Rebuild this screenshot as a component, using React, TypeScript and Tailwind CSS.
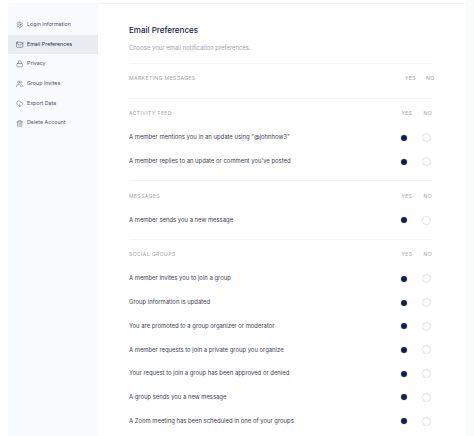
import { Settings, Mail, Lock, Users, CloudDownload, Trash2 } from "lucide-react";

const nav = [
  { label: "Login Information", Icon: Settings },
  { label: "Email Preferences", Icon: Mail, active: true },
  { label: "Privacy", Icon: Lock },
  { label: "Group Invites", Icon: Users },
  { label: "Export Data", Icon: CloudDownload },
  { label: "Delete Account", Icon: Trash2 },
];

const sections = [
  { title: "MARKETING MESSAGES", rows: [] as string[] },
  {
    title: "ACTIVITY FEED",
    rows: ['A member mentions you in an update using "@johnhow3"', "A member replies to an update or comment you've posted"],
  },
  { title: "MESSAGES", rows: ["A member sends you a new message"] },
  {
    title: "SOCIAL GROUPS",
    rows: [
      "A member invites you to join a group",
      "Group information is updated",
      "You are promoted to a group organizer or moderator",
      "A member requests to join a private group you organize",
      "Your request to join a group has been approved or denied",
      "A group sends you a new message",
      "A Zoom meeting has been scheduled in one of your groups",
    ],
  },
];

function Radios() {
  return (
    <div className="flex items-center gap-[15px] pr-[1px]">
      <span className="w-[6px] h-[6px] rounded-full bg-[#122145] ring-1 ring-[#e8edf8]" />
      <span className="w-[9px] h-[9px] rounded-full border border-[#e3e5e8] bg-white" />
    </div>
  );
}

export default function App() {
  return (
    <div className="w-[474px] h-[436px] overflow-hidden bg-[#fafbfe] flex font-['Inter',sans-serif]">
      <div className="w-[8px] h-full bg-white shrink-0" />
      <div className="flex flex-col shrink-0">
        <div className="h-[3px] w-[457px] bg-white shrink-0" />
        <div className="flex">
          <aside className="w-[90px] h-[433px] bg-[#f9fafd] pt-[12px] shrink-0">
            {nav.map(({ label, Icon, active }) => (
              <div
                key={label}
                className={`h-[19.7px] flex items-center gap-[3.5px] pl-[8px] text-[5.3px] ${active ? "bg-[#e9edf2] text-[#2d3748]" : "text-[#4a5568]"}`}
              >
                <Icon size={7.5} strokeWidth={1.5} className="shrink-0" />
                <span>{label}</span>
              </div>
            ))}
          </aside>
          <main className="w-[367px] h-[433px] bg-white border-t border-[#f3f4f6] pl-[31px] pr-[33px] shrink-0">
            <h1 className="text-[8px] font-medium text-[#122145] leading-[12px] pt-[20px]">Email Preferences</h1>
            <p className="text-[5.9px] text-[#a0a3a8] leading-[8px] mt-[8px] mb-[11px]">Choose your email notification preferences.</p>
            {sections.map((s, i) => (
              <section key={s.title} className={`border-t border-[#f3f4f6] pt-[8px] ${i === 0 ? "pb-[12px]" : "pb-[7px]"}`}>
                <div className="flex items-center justify-between h-[14px] text-[5.1px] tracking-[0.4px] text-[#a0a3a8]">
                  <span>{s.title}</span>
                  <div className={`flex ${i === 0 ? "gap-[10px] translate-x-[2.5px]" : "gap-[11px]"}`}>
                    <span>YES</span>
                    <span>NO</span>
                  </div>
                </div>
                {s.rows.length > 0 && (
                  <div className="mt-[5px]">
                    {s.rows.map((r) => (
                      <div key={r} className="flex items-center justify-between h-[23.7px] text-[5.9px] text-[#3c4150]">
                        <span>{r}</span>
                        <Radios />
                      </div>
                    ))}
                  </div>
                )}
              </section>
            ))}
          </main>
        </div>
      </div>
    </div>
  );
}
